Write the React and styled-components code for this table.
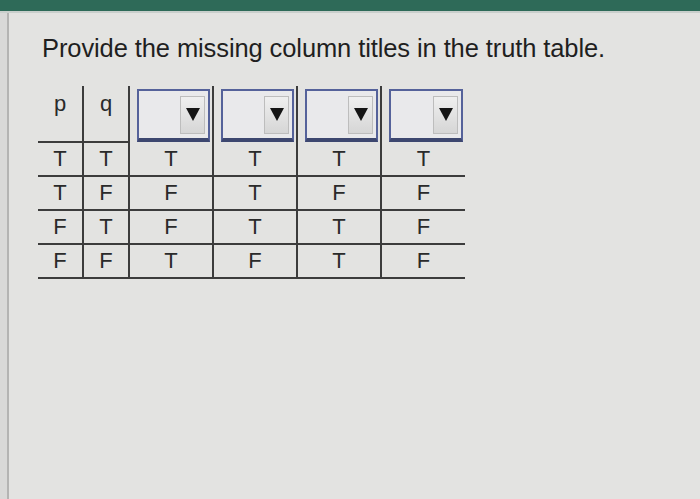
import React from "react";
import styled, { createGlobalStyle } from "styled-components";

const Global = createGlobalStyle`
  html, body { margin: 0; padding: 0; background: #e3e3e1; }
  body { font-family: "Liberation Sans", Arial, sans-serif; }
`;

const Page = styled.div`
  width: 700px;
  height: 499px;
  display: flex;
  flex-direction: column;
  background: #e3e3e1;
  overflow: hidden;
`;

const TopBar = styled.div`
  height: 11px;
  background: #2e6a58;
  border-bottom: 2px solid #c9cfcc;
  flex: none;
`;

const Body = styled.div`
  flex: 1;
  display: flex;
`;

const SideStrip = styled.div`
  width: 7px;
  background: #d9d9d8;
  border-right: 2px solid #b4b4b3;
  flex: none;
`;

const Content = styled.div`
  flex: 1;
  padding: 20px 0 0 29px;
`;

const Title = styled.h1`
  margin: 0 0 23px 4px;
  font-size: 25.5px;
  font-weight: normal;
  line-height: 30px;
  color: #1f1f1f;
  letter-spacing: -0.1px;
`;

const Table = styled.table`
  border-collapse: collapse;
  table-layout: fixed;
  color: #2a2a2a;
  font-size: 22px;
`;

const Cell = styled.td`
  width: ${(p) => p.$w}px;
  height: 32px;
  padding: 0;
  text-align: center;
  vertical-align: middle;
  border-bottom: 2px solid #3c3c3c;
  border-left: ${(p) => (p.$first ? "none" : "2px solid #3c3c3c")};
`;

const HeadCell = styled(Cell).attrs({ as: "th" })`
  height: ${(p) => (p.$select ? "55px" : "50px")};
  font-weight: normal;
  border-bottom: ${(p) => (p.$select ? "none" : "2px solid #3c3c3c")};
  vertical-align: ${(p) => (p.$select ? "bottom" : "top")};
  padding: ${(p) => (p.$select ? "0" : "5px 0 0")};
  line-height: 26px;
`;

const SelectBox = styled.div`
  margin: 0 2px 0 7px;
  height: 53px;
  box-sizing: border-box;
  border: 2px solid #55629a;
  border-bottom: 4px solid #3d476f;
  background: #e9e9eb;
  display: flex;
  justify-content: flex-end;
  align-items: center;
  padding-right: 3px;
`;

const ArrowButton = styled.div`
  width: 25px;
  height: 38px;
  box-sizing: border-box;
  border: 1px solid #bdbdbd;
  background: linear-gradient(#efefef, #d6d6d6);
  display: flex;
  align-items: center;
  justify-content: center;
`;

const Arrow = () => (
  <svg width="14" height="13" viewBox="0 0 14 13">
    <polygon points="0,0 14,0 7,13" fill="#151515" />
  </svg>
);

const widths = [44, 44, 82, 82, 82, 83];
const rows = [
  ["T", "T", "T", "T", "T", "T"],
  ["T", "F", "F", "T", "F", "F"],
  ["F", "T", "F", "T", "T", "F"],
  ["F", "F", "T", "F", "T", "F"],
];

export default function App() {
  return (
    <Page>
      <Global />
      <TopBar />
      <Body>
        <SideStrip />
        <Content>
          <Title>Provide the missing column titles in the truth table.</Title>
          <Table>
            <thead>
              <tr>
                <HeadCell $w={widths[0]} $first>p</HeadCell>
                <HeadCell $w={widths[1]}>q</HeadCell>
                {[2, 3, 4, 5].map((i) => (
                  <HeadCell key={i} $w={widths[i]} $select>
                    <SelectBox>
                      <ArrowButton>
                        <Arrow />
                      </ArrowButton>
                    </SelectBox>
                  </HeadCell>
                ))}
              </tr>
            </thead>
            <tbody>
              {rows.map((r, ri) => (
                <tr key={ri}>
                  {r.map((v, ci) => (
                    <Cell key={ci} $w={widths[ci]} $first={ci === 0}>
                      {v}
                    </Cell>
                  ))}
                </tr>
              ))}
            </tbody>
          </Table>
        </Content>
      </Body>
    </Page>
  );
}
